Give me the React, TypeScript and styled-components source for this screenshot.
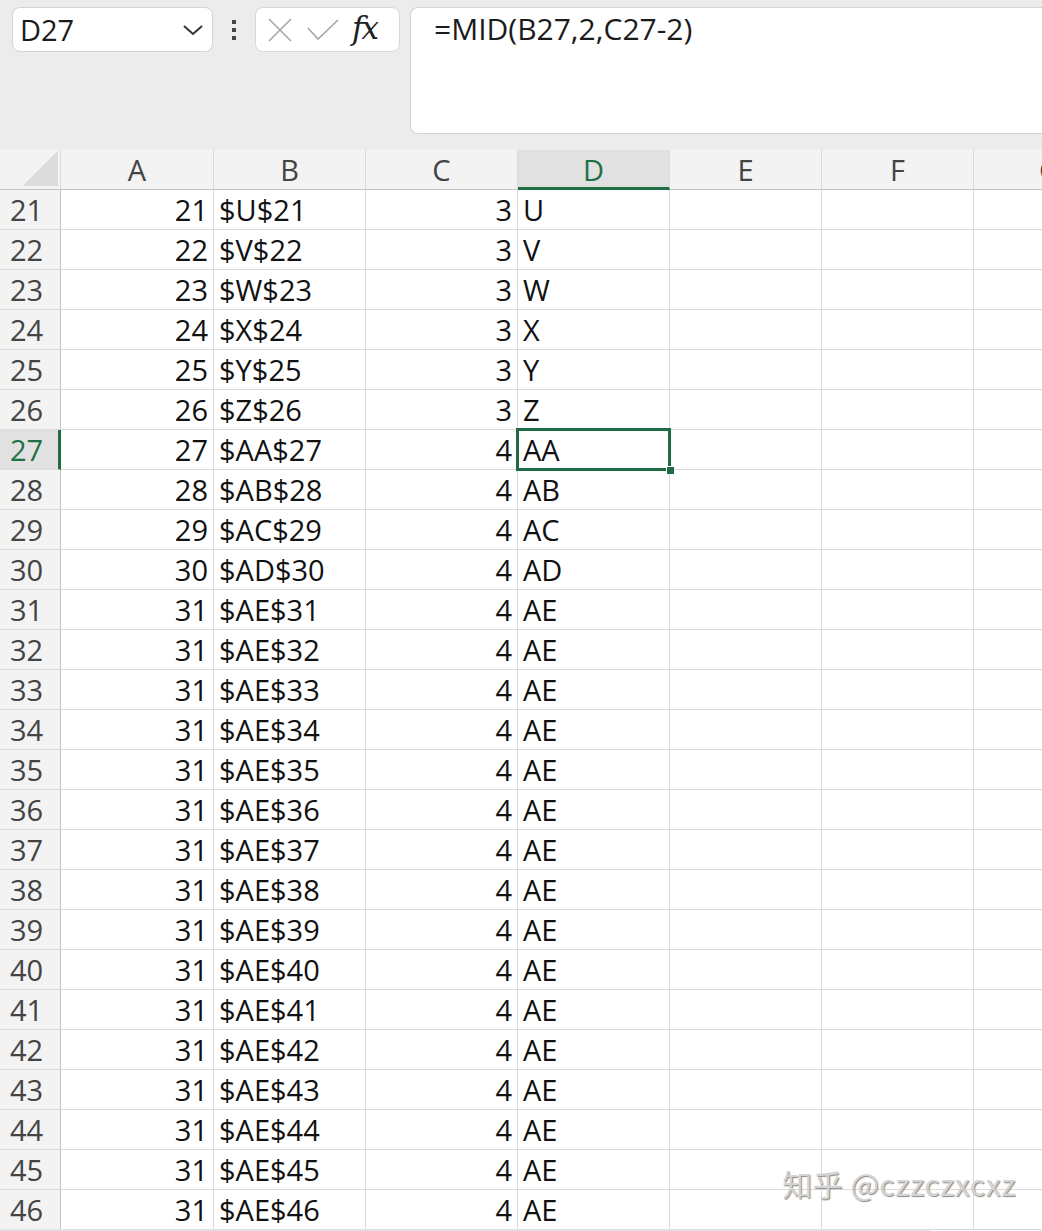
import React from "react";
import styled, { createGlobalStyle } from "styled-components";

const Global = createGlobalStyle`
  html, body { margin: 0; padding: 0; background: #ffffff; }
  body { font-family: "Open Sans", "Noto Sans", sans-serif; }
  #root { width: 1042px; height: 1231px; overflow: hidden; position: relative; }
`;

const Page = styled.div`
  width: 1042px;
  height: 1231px;
  overflow: hidden;
  position: relative;
  display: flex;
  flex-direction: column;
  background: #ffffff;
`;

const Toolbar = styled.div`
  height: 150px;
  flex: none;
  background: #ececec;
  display: flex;
  align-items: flex-start;
  padding: 7px 0 0 12px;
  box-sizing: border-box;
`;

const NameBox = styled.div`
  width: 201px;
  height: 45px;
  box-sizing: border-box;
  background: #fff;
  border: 1px solid #d3d3d3;
  border-radius: 8px;
  display: flex;
  align-items: center;
  justify-content: space-between;
  padding: 0 8px 0 7px;
  font-size: 29px;
  color: #1b1b1b;
`;

const Dots = styled.div`
  width: 42px;
  height: 45px;
  display: flex;
  flex-direction: column;
  align-items: center;
  justify-content: center;
  gap: 4px;
  span {
    width: 4px;
    height: 4px;
    background: #444;
    display: block;
  }
`;

const ButtonGroup = styled.div`
  width: 145px;
  height: 45px;
  box-sizing: border-box;
  background: #fff;
  border: 1px solid #d8d8d8;
  border-radius: 8px;
  display: flex;
  align-items: center;
  padding: 0 8px 0 10px;
  gap: 12px;
`;

const Fx = styled.span`
  font-family: "DejaVu Serif", "Liberation Serif", serif;
  font-style: italic;
  font-weight: normal;
  font-size: 31px;
  color: #222;
  letter-spacing: -2px;
  line-height: 1;
  margin-top: -2px;
`;

const FormulaBox = styled.div`
  margin-left: 10px;
  flex: 1;
  height: 127px;
  box-sizing: border-box;
  background: #fff;
  border: 1px solid #d4d4d4;
  border-right: none;
  border-radius: 8px 0 0 8px;
  padding: 1px 0 0 23px;
  font-size: 30px;
  color: #1b1b1b;
  line-height: 40px;
`;

const Sheet = styled.div`
  display: grid;
  grid-template-columns: 61px 153px repeat(6, 152px);
  grid-auto-rows: 40px;
  width: 1042px;
  overflow: hidden;
  font-size: 29px;
`;

const Corner = styled.div`
  background: #f3f3f3;
  border-bottom: 1px solid #c4c4c4;
  border-right: 1px solid #dadada;
  box-sizing: border-box;
  display: flex;
  align-items: flex-end;
  justify-content: flex-end;
  padding: 0 2px 3px 0;
  &::after {
    content: "";
    width: 36px;
    height: 36px;
    background: linear-gradient(135deg, transparent 50%, #dcdcdc 50%);
  }
`;

const ColHeader = styled.div<{ $active?: boolean }>`
  background: ${(p) => (p.$active ? "#e1e1e1" : "#f3f3f3")};
  color: ${(p) => (p.$active ? "#1e7145" : "#444")};
  border-right: 1px solid #dadada;
  border-bottom: ${(p) => (p.$active ? "3px solid #1e6e42" : "1px solid #c4c4c4")};
  box-sizing: border-box;
  display: flex;
  align-items: center;
  justify-content: center;
  padding-top: ${(p) => (p.$active ? "2px" : "0")};
  line-height: 1;
`;

const RowHeader = styled.div<{ $active?: boolean }>`
  background: ${(p) => (p.$active ? "#e1e1e1" : "#f3f3f3")};
  color: ${(p) => (p.$active ? "#1e7145" : "#444")};
  border-right: ${(p) => (p.$active ? "3px solid #1e6e42" : "1px solid #c4c4c4")};
  border-bottom: 1px solid #dadada;
  box-sizing: border-box;
  display: flex;
  align-items: center;
  padding-left: 10px;
  line-height: 1;
`;

const Cell = styled.div<{ $align?: "left" | "right" }>`
  position: relative;
  border-right: 1px solid #dadada;
  border-bottom: 1px solid #dadada;
  box-sizing: border-box;
  display: flex;
  align-items: center;
  justify-content: ${(p) => (p.$align === "right" ? "flex-end" : "flex-start")};
  padding: 0 5px;
  color: #111;
  white-space: nowrap;
  line-height: 1;
`;

const Selection = styled.div`
  position: absolute;
  left: -2px;
  top: -2px;
  right: -2px;
  bottom: -2px;
  border: 3px solid #1f6b43;
  pointer-events: none;
  z-index: 2;
  &::after {
    content: "";
    position: absolute;
    right: -6px;
    bottom: -6px;
    width: 7px;
    height: 7px;
    background: #1f6b43;
    border: 1px solid #fff;
    border-right: none;
    border-bottom: none;
  }
`;

const Watermark = styled.div`
  position: absolute;
  right: 26px;
  bottom: 26px;
  font-family: "Noto Sans CJK SC", "Open Sans", sans-serif;
  font-size: 30px;
  color: #d4d4d4;
  text-shadow: 1px 1px 1px #8a8a8a;
  letter-spacing: 0.5px;
  z-index: 3;
`;

const ScrollHint = styled.div`
  position: absolute;
  left: 0;
  bottom: 0;
  width: 930px;
  height: 2px;
  background: #dde3e6;
`;

const cols = ["A", "B", "C", "D", "E", "F", "G"];

const letterFor = (n: number) =>
  n <= 26 ? String.fromCharCode(64 + n) : "A" + String.fromCharCode(64 + n - 26);

const rows = Array.from({ length: 26 }, (_, i) => {
  const r = 21 + i;
  const a = r <= 30 ? r : 31;
  const l = letterFor(a);
  return { r, a, b: `$${l}$${r}`, c: r <= 26 ? 3 : 4, d: l };
});

const XIcon = () => (
  <svg width="28" height="28" viewBox="0 0 28 28" fill="none" stroke="#a6a6a6" strokeWidth="1.6">
    <path d="M3 3 L25 25 M25 3 L3 25" />
  </svg>
);

const CheckIcon = () => (
  <svg width="34" height="24" viewBox="0 0 34 24" fill="none" stroke="#a6a6a6" strokeWidth="1.6">
    <path d="M2 10 L12 21 L32 2" />
  </svg>
);

const Chevron = () => (
  <svg width="22" height="14" viewBox="0 0 22 14" fill="none" stroke="#333" strokeWidth="2">
    <path d="M2 3 L11 11 L20 3" />
  </svg>
);

export default function App() {
  return (
    <Page>
      <Global />
      <Toolbar>
        <NameBox>
          <span>D27</span>
          <Chevron />
        </NameBox>
        <Dots>
          <span />
          <span />
          <span />
        </Dots>
        <ButtonGroup>
          <XIcon />
          <CheckIcon />
          <Fx>fx</Fx>
        </ButtonGroup>
        <FormulaBox>=MID(B27,2,C27-2)</FormulaBox>
      </Toolbar>
      <Sheet>
        <Corner />
        {cols.map((c) => (
          <ColHeader key={c} $active={c === "D"}>
            {c}
          </ColHeader>
        ))}
        {rows.map((row) => (
          <React.Fragment key={row.r}>
            <RowHeader $active={row.r === 27}>{row.r}</RowHeader>
            <Cell $align="right">{row.a}</Cell>
            <Cell>{row.b}</Cell>
            <Cell $align="right">{row.c}</Cell>
            <Cell>
              {row.d}
              {row.r === 27 && <Selection />}
            </Cell>
            <Cell />
            <Cell />
            <Cell />
          </React.Fragment>
        ))}
      </Sheet>
      <Watermark>知乎 @czzczxcxz</Watermark>
      <ScrollHint />
    </Page>
  );
}
